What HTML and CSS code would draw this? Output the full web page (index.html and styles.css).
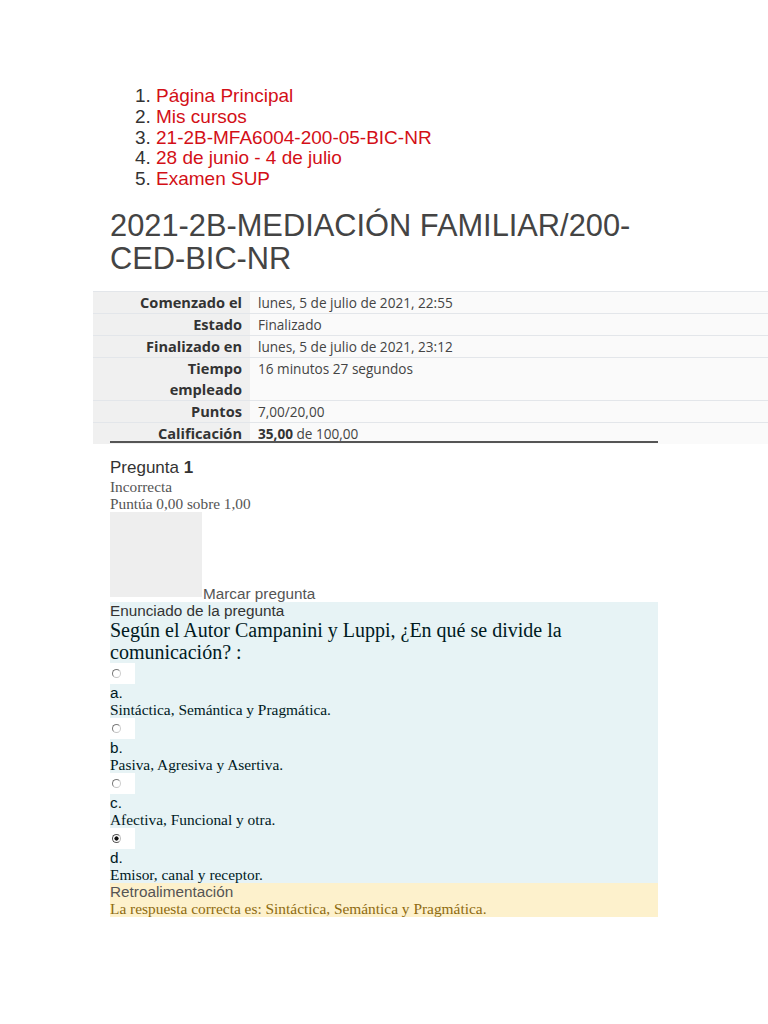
FILE: index.html
```html
<!DOCTYPE html>
<html lang="es">
<head>
<meta charset="utf-8">
<title>Examen SUP</title>
<link rel="stylesheet" href="styles.css">
</head>
<body>
<div class="page">
  <ol class="crumbs">
    <li><a href="#">Página Principal</a></li>
    <li><a href="#">Mis cursos</a></li>
    <li><a href="#">21-2B-MFA6004-200-05-BIC-NR</a></li>
    <li><a href="#">28 de junio - 4 de julio</a></li>
    <li><a href="#">Examen SUP</a></li>
  </ol>
  <h1 class="title">2021-2B-MEDIACIÓN FAMILIAR/200-CED-BIC-NR</h1>

  <table class="summary">
    <tr><th>Comenzado el</th><td>lunes, 5 de julio de 2021, 22:55</td></tr>
    <tr><th>Estado</th><td>Finalizado</td></tr>
    <tr><th>Finalizado en</th><td>lunes, 5 de julio de 2021, 23:12</td></tr>
    <tr><th>Tiempo empleado</th><td>16 minutos 27 segundos</td></tr>
    <tr><th>Puntos</th><td>7,00/20,00</td></tr>
    <tr><th>Calificación</th><td><b>35,00</b> de 100,00</td></tr>
  </table>
  <div class="rule"></div>

  <div class="question">
    <h3 class="qno">Pregunta <b>1</b></h3>
    <div class="state">Incorrecta</div>
    <div class="grade">Puntúa 0,00 sobre 1,00</div>
    <div class="flagline"><span class="flagbox"></span><span class="flagtext">Marcar pregunta</span></div>

    <div class="formulation">
      <div class="seclabel">Enunciado de la pregunta</div>
      <div class="qtext">Según el Autor Campanini y Luppi, ¿En qué se divide la comunicación? :</div>
      <div class="opt">
        <div class="radiobox"><span class="radio"></span></div>
        <div class="letter">a.</div>
        <div class="answer">Sintáctica, Semántica y Pragmática.</div>
      </div>
      <div class="opt">
        <div class="radiobox"><span class="radio"></span></div>
        <div class="letter">b.</div>
        <div class="answer">Pasiva, Agresiva y Asertiva.</div>
      </div>
      <div class="opt">
        <div class="radiobox"><span class="radio"></span></div>
        <div class="letter">c.</div>
        <div class="answer">Afectiva, Funcional y otra.</div>
      </div>
      <div class="opt">
        <div class="radiobox"><span class="radio checked"></span></div>
        <div class="letter">d.</div>
        <div class="answer">Emisor, canal y receptor.</div>
      </div>
    </div>

    <div class="feedback">
      <div class="seclabel fb">Retroalimentación</div>
      <div class="rightanswer">La respuesta correcta es: Sintáctica, Semántica y Pragmática.</div>
    </div>
  </div>
</div>
</body>
</html>
```

FILE: styles.css
```css
html, body {
  margin: 0;
  padding: 0;
  background: #ffffff;
}

.page {
  width: 548px;
  padding: 86px 0 0 110px;
}

.crumbs {
  margin: 0;
  padding: 0 0 0 46px;
  font-family: "Liberation Sans", Arial, sans-serif;
  font-size: 19px;
  line-height: 20.8px;
  color: #333333;
}

.crumbs a {
  color: #d30f17;
  text-decoration: none;
}

.title {
  margin: 19px 0 0 0;
  font-family: "Liberation Sans", Arial, sans-serif;
  font-weight: normal;
  font-size: 30.8px;
  line-height: 33.5px;
  color: #444444;
}

.summary {
  margin: 15px 0 0 -17px;
  width: 675px;
  border-collapse: collapse;
  font-family: "Open Sans", sans-serif;
  font-size: 13.6px;
  line-height: 21px;
  color: #333333;
}

.summary th,
.summary td {
  border-top: 1px solid #e3e6ea;
  padding: 0 8px;
  vertical-align: top;
}

.summary th {
  width: 112px;
  padding-left: 37px;
  text-align: right;
  font-weight: bold;
  font-size: 14.6px;
  background: #f0f0f0;
}

.summary td {
  background: #fafafa;
  color: #444444;
}

.summary td b {
  color: #333333;
}

.rule {
  height: 2px;
  background: #555555;
  margin-top: -3px;
  position: relative;
}

.question {
  margin-top: 15px;
}

.qno {
  margin: 0;
  font-family: "Liberation Sans", Arial, sans-serif;
  font-weight: normal;
  font-size: 17px;
  line-height: 20px;
  color: #333333;
}

.state,
.grade {
  font-family: "Liberation Serif", "Times New Roman", serif;
  font-size: 15.3px;
  line-height: 17px;
  color: #555555;
}

.flagline {
  display: flex;
  align-items: flex-end;
  height: 90px;
}

.flagbox {
  display: block;
  width: 92px;
  height: 85px;
  margin-bottom: 5px;
  background: #eeeeee;
}

.flagtext {
  font-family: "Liberation Sans", Arial, sans-serif;
  font-size: 15.3px;
  line-height: 17px;
  color: #555555;
  margin-left: 1px;
}

.formulation {
  background: #e7f3f5;
  color: #001a1e;
}

.seclabel {
  font-family: "Liberation Sans", Arial, sans-serif;
  font-size: 15.3px;
  line-height: 17px;
  color: #333333;
}

.qtext {
  font-family: "Liberation Serif", "Times New Roman", serif;
  font-size: 20px;
  line-height: 22px;
  color: #001a1e;
}

.radiobox {
  width: 25px;
  height: 21px;
  background: #ffffff;
  display: flex;
  align-items: center;
}

.radio {
  display: block;
  box-sizing: border-box;
  width: 9px;
  height: 9px;
  margin-left: 2px;
  border-radius: 50%;
  border: 1px solid #7a7a7a;
  border-right-color: #cccccc;
  border-bottom-color: #c4c4c4;
  background: #ffffff;
}

.radio.checked {
  border-color: #555555;
  border-right-color: #bbbbbb;
  background: radial-gradient(circle, #111111 0 1.8px, #ffffff 2.4px);
}

.letter {
  font-family: "Liberation Sans", Arial, sans-serif;
  font-size: 15.3px;
  line-height: 17px;
  color: #001a1e;
}

.answer {
  font-family: "Liberation Serif", "Times New Roman", serif;
  font-size: 15.4px;
  line-height: 17px;
  color: #001a1e;
}

.feedback {
  background: #fdf1cc;
}

.seclabel.fb {
  color: #555555;
}

.rightanswer {
  font-family: "Liberation Serif", "Times New Roman", serif;
  font-size: 15.4px;
  line-height: 17px;
  color: #8e6b10;
}
```
